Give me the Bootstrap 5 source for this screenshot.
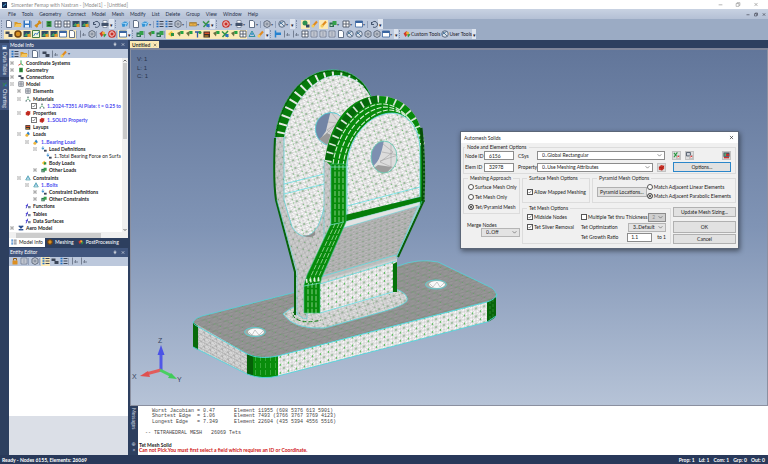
<!DOCTYPE html>
<html lang="en">
<head>
<meta charset="utf-8">
<meta name="viewport" content="width=device-width, initial-scale=1">
<title>Simcenter Femap with Nastran</title>
<link href="https://cdn.jsdelivr.net/npm/bootstrap@5.3.0/dist/css/bootstrap.min.css" rel="stylesheet">
<style>
:root{--navy:#2d3f5f;--cap:#40557d;--strip:#bcc8dc;--tick:#9babc4}
body{font:5px/6px "Lato","Liberation Sans",sans-serif;color:#1c1c28;background:var(--navy);overflow:hidden}
button,input,select{font:inherit;color:inherit}
button{border:0;background:none;padding:0}
svg{display:block}
.app{height:100vh}
.titlebar{height:9px;background:#fff;color:#8b8b8b;padding:0 9px 0 2px}
.winbtns{gap:12px}
.menubar{height:10px;background:linear-gradient(#c8d2e2,#b4c0d5);padding:0 2px 0 5px}
.menubar a{color:#27324a;text-decoration:none;padding:0 3px}
.tools{background:var(--tick);padding-bottom:1px}
.trow{height:10px}
.tgroup{background:var(--strip)}
.tb{width:9px;height:9px;display:grid;place-items:center;color:#4d5a70}
.tb svg{width:8px;height:8px}
.tb.hot{background:#fbeab8}
.tgrip{width:3px;height:8px;border-left:1px dotted #8291ad;margin-left:1px}
.tools .trow:first-child .tgrip{width:5px}
.tools .trow:first-child .tovf{width:5px}
.tools .trow:first-child .tgroup:first-child .tgrip{width:3px}
.tsep{width:2px;height:7px;border-left:1px solid #93a1ba}
.tcar{width:4px;color:#4a5870;font-size:4px;line-height:9px}
.tovf{width:4px;background:#dde4ef;height:10px;line-height:13px;text-align:center}
.rail{width:9px}
.vtab{writing-mode:vertical-rl;background:var(--cap);color:#e4e9f2;margin-top:3px;padding:2px 1px;line-height:7px;gap:2px}
.side{width:119px;margin-right:2px}
.model{flex:207 1 0;min-height:0}
.entity{flex:207 1 0;min-height:0}
.cap{height:9px;background:var(--cap);color:#fff;padding:0 3px 0 1px}
.ptools{height:9px;background:var(--strip);padding-left:1px}
.tree{background:#fff;overflow:hidden}
.treelist{display:grid;grid-template-rows:repeat(24,1fr);list-style:none;margin:0;padding:1px 0 0 1px;font-weight:700;color:#222;overflow:hidden;white-space:nowrap}
.treelist li{display:flex;align-items:center;gap:2px;min-height:0}
.treelist svg{width:6px;height:6px;flex:none}
.treelist .pm{width:4px;height:4px;margin-right:2px}
.treelist .blue{color:#4a4af0}
.treelist input{width:6px;height:6px;margin:0;flex:none;appearance:none;border:1px solid #777;background:#fff}
.l1{padding-left:7px}.l2{padding-left:15px}.l3{padding-left:23px}.l4{padding-left:36px}
.treelist .tick{padding-left:21px}
.vbar{width:6px;background:#f0f0f0}
.vbar i{height:44%;background:#c9c9c9;margin:0 1px}
.hbar{height:6px;background:#f0f0f0;padding:1px 6px 0 7px}
.hbar i{display:block;width:80%;height:5px;background:#cdcdcd}
.ptabs{height:10px;padding-bottom:1px}
.ptabs button{color:#fff;gap:2px;padding:0 2px}
.ptabs svg{width:6px;height:6px}
.ptabs .on{background:#fff;color:#222}
.note{height:39px;background:#dbdfe7}
.doctabs{height:8px;padding-top:1px}
.doctabs button{background:#fbe9b5;color:#333;font-weight:700;padding:0 2px;gap:3px}
.view{border:1px solid #8b90a0;border-top-width:2px;border-top-color:#80869a;background:linear-gradient(#62769a,#8094b5 50%,#b6c3d7)}
.view>svg{width:100%;height:100%}
.msgs{height:49px}
.msgrail{width:8px;color:#d5dbe7;writing-mode:vertical-rl;line-height:8px;padding:2px 0}
.log{display:grid;grid-template-rows:repeat(8,1fr);background:#fff;padding:2px 0 2px 1px;white-space:pre;font-family:"Liberation Mono",monospace;color:#444}
.log div{display:flex;align-items:center;min-height:0}
.log .c1{width:82px;margin-left:13px}
.log .say{font-family:"Lato",sans-serif;font-weight:700;color:#222}
.log .err{color:#d01313}
.status{height:9px;color:#fff;padding:0 3px 0 2px;background:#29395a;font-weight:700}
.dlg{position:absolute;left:329px;top:81px;width:279px;background:#f0f0f0;border:1px solid #5b6678;box-shadow:1px 2px 5px #0007;color:#222}
.dlgcap{height:11px;background:#fff;padding:0 4px 0 3px}
.dlgbody{padding:1px 2px 4px;gap:1px}
.dlg fieldset{border:1px solid #dcdcdc;padding:1px 4px;min-width:0}
.dlg legend{float:none;width:auto;font-size:5px;line-height:6px;margin:0;padding:0 2px}
.dlg label,.push{white-space:nowrap}
.txt,.sel{height:9px;border:1px solid #8c8c8c;background:#fff;border-radius:0;padding:0 4px;line-height:7px}
.sel{appearance:none;background:#fff url("data:image/svg+xml,%3Csvg xmlns='http://www.w3.org/2000/svg' viewBox='0 0 8 8'%3E%3Cpath d='M1 2l3 3 3-3' fill='none' stroke='%23555'/%3E%3C/svg%3E") no-repeat right 2px center/5px 5px}
.sel.flat{background-color:#e3e3e3;border-color:#b5b5b5}
.sel:disabled{background-color:#cfcfcf;color:#888;padding:0 3px;opacity:1}
.push{background:#e1e1e1;border:1px solid #b0b0b0;height:10px;line-height:8px;text-align:center}
.push.tall{height:12px}
.push.focus{border-color:#2b86c9;width:58px}
.push.pyr{padding:0 2px}
.sq{width:9px;height:9px;background:#dedede;border:1px solid #c2c2c2;display:grid;place-items:center}
.sq svg{width:7px;height:7px}
.opt{gap:1px;height:10px}
.opt input{appearance:none;width:6px;height:6px;margin:0;border:1px solid #555;background:#fff;flex:none}
.opt .txt{width:25px;height:9px;border-color:#8c8c8c;padding:0 3px}
.opt input[type=radio]{border-radius:50%}
.opt input[type=radio]:checked{background:#333;box-shadow:inset 0 0 0 1px #fff}
.opt input[type=checkbox]:checked,.treelist input:checked{background:#fff url("data:image/svg+xml,%3Csvg xmlns='http://www.w3.org/2000/svg' viewBox='0 0 8 8'%3E%3Cpath d='M1 4l2 2 4-5' fill='none' stroke='%23222'/%3E%3C/svg%3E") center/4px 4px no-repeat}
.w-lab{width:19px}.w-lab2{width:19px}.w-num{width:30px}
.colapp{width:57px}.colsurf{width:68px}.colbtn{width:63px;padding-top:2px}
.w-thk{width:18px}.w-opt{width:38px}.w-merge{width:39px}
.dlg .nodes{padding-left:1px}
.surfrow{height:19px}
.surfrow .opt{height:9px}
.nlabel{width:46px}
.nodes .r2{margin-top:2px}
.nodes .off{margin-left:7px}
.nodes .far{margin-left:28px}
.low,.toprow{gap:2px}
.rightcol{gap:2px}
.merge{padding-top:8px}
.tetcol{width:85px}
.cancel{margin-top:1px}
</style>
<script src="https://cdn.jsdelivr.net/npm/bootstrap@5.3.0/dist/js/bootstrap.bundle.min.js"></script>
</head>
<body>
<svg width="0" height="0" class="position-absolute" aria-hidden="true">
<symbol id="i-doc" viewBox="0 0 16 16"><path d="M3 1h7l3 3v11H3z" fill="#fff" stroke="#44546e" stroke-width="1.6"/></symbol>
<symbol id="i-open" viewBox="0 0 16 16"><path d="M1 4h5l2 2h6v8H1z" fill="#d89a2b"/><path d="M4 8h12l-3 6H1z" fill="#f4c55c"/></symbol>
<symbol id="i-save" viewBox="0 0 16 16"><path d="M1 1h14v14H1z" fill="#2d72c0"/><path d="M4 1h8v6H4zM4 10h8v5H4z" fill="#e8f0fa"/></symbol>
<symbol id="i-link" viewBox="0 0 16 16"><path d="M3 13L13 3M2 10l5 4M9 2l5 5" stroke="#d48a14" stroke-width="4"/></symbol>
<symbol id="i-geo" viewBox="0 0 16 16"><path d="M3 2h10v12H3z" fill="#3c9d4a"/><path d="M5 5h6M5 8h6M5 11h6" stroke="#174a25" stroke-width="1.5"/></symbol>
<symbol id="i-mesh" viewBox="0 0 16 16"><path d="M2 2h12v12H2zM8 2v12M2 8h12" fill="#fff" stroke="#3c4658" stroke-width="1.6"/></symbol>
<symbol id="i-list" viewBox="0 0 16 16"><path d="M1 3h4M1 8h4M1 13h4" stroke="#1e6ec4" stroke-width="3"/><path d="M7 3h8M7 8h8M7 13h8" stroke="#3c4658" stroke-width="2"/></symbol>
<symbol id="i-pic" viewBox="0 0 16 16"><path d="M1 2h14v12H1z" fill="#334a66"/><path d="M2 12l5-6 3 3 4-5v9z" fill="#3da663"/><path d="M9 8h6v6H9z" fill="#e89b2b"/></symbol>
<symbol id="i-undo" viewBox="0 0 16 16"><path d="M3 4v5h5M3 9a6 6 0 1 1 3 5" fill="none" stroke="#43536c" stroke-width="2"/></symbol>
<symbol id="i-print" viewBox="0 0 16 16"><path d="M4 1h8v5H4zM4 10h8v5H4z" fill="#fff" stroke="#43536c"/><path d="M1 6h14v6H1z" fill="#43536c"/></symbol>
<symbol id="i-cube" viewBox="0 0 16 16"><path d="M1 6l6-3 8 1-3 8-9 2z" fill="#3192d6"/><path d="M1 6l9 1 5-3M10 7l-1 6" fill="none" stroke="#d8effc" stroke-width="1.4"/></symbol>
<symbol id="i-gray" viewBox="0 0 16 16"><path d="M8 1l6 3v8l-6 3-6-3V4z" fill="#c9cdd5" stroke="#636e80" stroke-width="2"/><path d="M5 5h6v6H5z" fill="#8b94a3"/></symbol>
<symbol id="i-rule" viewBox="0 0 16 16"><path d="M1 5h14v7H1z" fill="#e7b04a" stroke="#8f661a"/><path d="M4 5v3M8 5v4M12 5v3" stroke="#6d4a0c"/></symbol>
<symbol id="i-red" viewBox="0 0 16 16"><circle cx="8" cy="8" r="6.5" fill="#f3d9d5" stroke="#c8312a" stroke-width="2.4"/><path d="M5 5h6v6H5z" fill="#c8312a"/></symbol>
<symbol id="i-x" viewBox="0 0 16 16"><path d="M2 3l12 11M14 2L3 14" stroke="#339347" stroke-width="3"/><path d="M9 8h6v6H9z" fill="#2f6fc0"/></symbol>
<symbol id="i-xr" viewBox="0 0 16 16"><path d="M2 2l8 9M10 1L2 12" stroke="#22963a" stroke-width="2.6"/><path d="M8 8h7v7H8z" fill="#fff" stroke="#888"/><path d="M10 12l4-3" stroke="#d33" stroke-width="2.4"/></symbol>
<symbol id="i-lr" viewBox="0 0 16 16"><path d="M1 1h9v8H1z" fill="#cfd4dc" stroke="#43505f" stroke-width="2"/><path d="M8 8h7v7H8z" fill="#fff" stroke="#888"/><path d="M10 12l4-3" stroke="#d33" stroke-width="2.4"/></symbol>
<symbol id="i-prev" viewBox="0 0 16 16"><path d="M1 1h14v10H1z" fill="#3b4b5c"/><path d="M3 3h5v6H3z" fill="#58ab72"/><path d="M7 4h7v5H7z" fill="#c9302c"/><path d="M2 13h12" stroke="#c9302c" stroke-width="3"/></symbol>
<symbol id="i-pen" viewBox="0 0 16 16"><path d="M3 13L12 3" stroke="#e08a1e" stroke-width="4"/><circle cx="4" cy="12" r="3" fill="#f5cb59"/></symbol>
<symbol id="i-dot" viewBox="0 0 16 16"><circle cx="6" cy="6" r="5" fill="#2d9150"/><path d="M8 9h7v6H8z" fill="#334a66"/></symbol>
<symbol id="i-ball" viewBox="0 0 16 16"><circle cx="8" cy="8" r="6" fill="#d99022" stroke="#734410" stroke-width="3"/></symbol>
<symbol id="i-plot" viewBox="0 0 16 16"><path d="M1 1h14v14H1z" fill="#eef8dd" stroke="#477d45" stroke-width="2"/><path d="M3 12l4-6 3 3 4-6" fill="none" stroke="#3978c2" stroke-width="2"/></symbol>
<symbol id="i-win" viewBox="0 0 16 16"><path d="M1 2h14v12H1z" fill="#fff" stroke="#3a65a0" stroke-width="1.6"/><path d="M1 2h14v4H1z" fill="#3a65a0"/></symbol>
<symbol id="i-g2" viewBox="0 0 16 16"><path d="M1 5h9v9H1z" fill="#2f6b52"/><path d="M7 2h8v8H7z" fill="#34a04a"/><path d="M3 9h4v3H3z" fill="#b6e3c0"/></symbol>
<symbol id="i-tri" viewBox="0 0 16 16"><path d="M8 2l6 11H2z" fill="none" stroke="#3192a0" stroke-width="2"/><circle cx="8" cy="8" r="2" fill="#2e8bd0"/></symbol>
<symbol id="i-axis" viewBox="0 0 16 16"><path d="M8 1v9l6 4" fill="none" stroke="#29a049" stroke-width="2.4"/><path d="M8 10l-7 4" stroke="#d83a30" stroke-width="2.4"/></symbol>
<symbol id="i-blk" viewBox="0 0 16 16"><path d="M1 3h8v5H1zM7 8h8v6H7z" fill="#3c4658"/></symbol>
<symbol id="i-mat" viewBox="0 0 16 16"><path d="M8 2v5M3 13l4-5M13 13L9 8" stroke="#3a9f5b" stroke-width="2"/><circle cx="3" cy="13" r="2" fill="#6a7686"/><circle cx="13" cy="13" r="2" fill="#6a7686"/><circle cx="8" cy="3" r="2" fill="#6a7686"/></symbol>
<symbol id="i-prop" viewBox="0 0 16 16"><path d="M2 7l5-5 7 2v7l-5 4-7-2z" fill="#cf3328"/><path d="M2 7l7 2 5-5M9 9v6" stroke="#7c130d" fill="none"/></symbol>
<symbol id="i-lay" viewBox="0 0 16 16"><path d="M1 3h13v12H1z" fill="#3b2d29"/><path d="M3 5h10v3H3z" fill="#d9552c"/><path d="M3 11h8v2H3z" fill="#e5a52c"/></symbol>
<symbol id="i-load" viewBox="0 0 16 16"><path d="M8 1c4 4 5 6 4 9l-8 1C3 7 6 5 8 1z" fill="#2d80c8"/><circle cx="5" cy="11" r="4" fill="#edb43a"/></symbol>
<symbol id="i-down" viewBox="0 0 16 16"><path d="M5 1v7M2 5l3 4 3-4" stroke="#247fc9" stroke-width="2.2" fill="none"/><path d="M8 10h7v5H8z" fill="#3c4658"/></symbol>
<symbol id="i-fx" viewBox="0 0 16 16"><path d="M7 2L3 14M2 7h6" stroke="#4a42d4" stroke-width="2.6"/><path d="M8 8h7v6H8z" fill="#7b8698"/></symbol>
<symbol id="i-aero" viewBox="0 0 16 16"><path d="M2 2l12 12M14 2L2 14M8 1v14" stroke="#274b8d" stroke-width="3"/></symbol>
<symbol id="i-lock" viewBox="0 0 16 16"><path d="M5 7V3h6v4" fill="none" stroke="#8b5a14" stroke-width="2"/><path d="M3 7h10v8H3z" fill="#dd8f22"/></symbol>
<symbol id="i-star" viewBox="0 0 16 16"><path d="M2 8l7-6 5 6-5 6z" fill="#f1c53d"/><path d="M8 6h6v6H8z" fill="#2c8f45"/></symbol>
<symbol id="i-bolt" viewBox="0 0 16 16"><path d="M2 6l8-4-2 11z" fill="#6a7042"/><path d="M9 2h6v6H9z" fill="#25a343"/></symbol>
<symbol id="i-tt" viewBox="0 0 16 16"><path d="M2 4h11M7 4v11" stroke="#2e57a8" stroke-width="2.6"/><circle cx="12" cy="5" r="3" fill="#25a343"/></symbol>
<symbol id="i-flag" viewBox="0 0 16 16"><path d="M3 1v14" stroke="#2782cf" stroke-width="3"/><path d="M4 5h10v5H4z" fill="#2782cf"/></symbol>
<symbol id="i-gflag" viewBox="0 0 16 16"><path d="M3 1v14M6 10h8M9 6v6" stroke="#758093" stroke-width="2"/></symbol>
<symbol id="i-gbox" viewBox="0 0 16 16"><path d="M2 2h12v12H2z" fill="#d6dae2" stroke="#69758a" stroke-width="1.6"/><path d="M5 6h6M5 10h6" stroke="#69758a" stroke-width="1.6"/></symbol>
<symbol id="i-rg" viewBox="0 0 16 16"><path d="M1 7l6-5 3 6-5 6z" fill="#cf3a2b"/><path d="M8 6l7 3-5 6z" fill="#2c9a48"/><circle cx="9" cy="6" r="3" fill="#e9b436"/></symbol>
<symbol id="i-globe" viewBox="0 0 16 16"><circle cx="8" cy="8" r="6.5" fill="#d8dfe8" stroke="#43536c" stroke-width="1.6"/><path d="M4 4l8 8M2 9l9-6" stroke="#33628c" stroke-width="1.6"/></symbol>
<symbol id="i-pin" viewBox="0 0 16 16"><path d="M5 2h6v7H5zM3 9h10M8 9v6" fill="none" stroke="currentColor" stroke-width="2"/></symbol>
<symbol id="i-close" viewBox="0 0 16 16"><path d="M3 3l10 10M13 3L3 13" stroke="currentColor" stroke-width="2"/></symbol>
<symbol id="i-rest" viewBox="0 0 16 16"><path d="M2 5h9v9H2zM5 5V2h9v9h-3" fill="none" stroke="currentColor" stroke-width="1.8"/></symbol>
<symbol id="i-min" viewBox="0 0 16 16"><path d="M2 9h12" stroke="currentColor" stroke-width="2"/></symbol>
<symbol id="i-plus" viewBox="0 0 16 16"><path d="M1 1h14v14H1z" fill="#fff" stroke="#999" stroke-width="2"/><path d="M4 8h8M8 4v8" stroke="#444" stroke-width="2"/></symbol>
<symbol id="i-minus" viewBox="0 0 16 16"><path d="M1 1h14v14H1z" fill="#fff" stroke="#999" stroke-width="2"/><path d="M4 8h8" stroke="#444" stroke-width="2"/></symbol>
<symbol id="i-none" viewBox="0 0 16 16"></symbol>
</svg>

<div class="app d-flex flex-column">
  <header class="titlebar d-flex align-items-center justify-content-between flex-shrink-0">
    <div class="d-flex align-items-center gap-1"><svg width="5" height="6" viewBox="0 0 10 12"><path d="M0 0h10v12H0z" fill="#182c50"/><path d="M2 8c4 0 2-4 6-4" stroke="#50b0e0" fill="none" stroke-width="2"/></svg><span>Simcenter Femap with Nastran - [Model1] - [Untitled]</span></div>
    <div class="winbtns d-flex"><button type="button" aria-label="Minimize"><svg width="5" height="5"><use href="#i-min"/></svg></button><button type="button" aria-label="Restore"><svg width="6" height="5"><use href="#i-rest"/></svg></button><button type="button" aria-label="Close"><svg width="6" height="5"><use href="#i-close"/></svg></button></div>
  </header>
  <nav class="menubar d-flex align-items-center justify-content-between flex-shrink-0">
    <div class="d-flex"><a href="#">File</a><a href="#">Tools</a><a href="#">Geometry</a><a href="#">Connect</a><a href="#">Model</a><a href="#">Mesh</a><a href="#">Modify</a><a href="#">List</a><a href="#">Delete</a><a href="#">Group</a><a href="#">View</a><a href="#">Window</a><a href="#">Help</a></div>
    <div class="d-flex gap-1"><svg width="4" height="5"><use href="#i-min"/></svg><svg width="4" height="5"><use href="#i-rest"/></svg><svg width="4" height="5"><use href="#i-close"/></svg></div>
  </nav>
  <div class="tools flex-shrink-0">
    <div class="trow d-flex" data-bar="g doc open save | link | geo mesh mesh pic pic | undo print o;g cube | doc cube v | list list gray v | rule v x o;g red v print v doc v | gray v | globe v o;g *dot pen *pen g2 v mesh v win v | undo o"></div>
    <div class="trow d-flex" data-bar="g *blk *ball *pic *plot *pic *pic *win *doc | gflag gray | rg red | *win o;g g2 | bolt g2 | *star *bolt *bolt *tt *lay *bolt *x *bolt *mesh tri pen o;g flag gflag gflag mesh gbox gbox gbox doc globe globe gray gray win v o;g rg:Custom_Tools globe:User_Tools o"></div>
  </div>
  <main class="d-flex flex-fill overflow-hidden">
    <div class="rail d-flex flex-column align-items-start flex-shrink-0">
      <button type="button" class="vtab d-flex align-items-center"><svg width="5" height="5"><use href="#i-win"/></svg>Data Table</button>
      <button type="button" class="vtab d-flex align-items-center"><svg width="5" height="5"><use href="#i-x"/></svg>Charting</button>
    </div>
    <aside class="side d-flex flex-column flex-shrink-0">
      <section class="model d-flex flex-column">
        <div class="cap d-flex align-items-center justify-content-between"><span>Model Info</span><span class="d-flex gap-1"><svg width="4" height="5"><use href="#i-pin"/></svg><svg width="4" height="5"><use href="#i-close"/></svg></span></div>
        <div class="ptools d-flex" data-bar="list open | doc | blk gflag pen v"></div>
        <div class="tree d-flex flex-fill"><ul class="treelist flex-fill" id="tree"></ul><div class="vbar d-flex flex-column flex-shrink-0"><svg width="4" height="5" class="mx-auto" viewBox="0 0 8 10"><path d="M1 7l3-3 3 3" fill="none" stroke="#444" stroke-width="1.5"/></svg><i></i><svg width="4" height="5" class="mx-auto mt-auto" viewBox="0 0 8 10"><path d="M1 4l3 3 3-3" fill="none" stroke="#444" stroke-width="1.5"/></svg></div></div>
        <div class="hbar"><i></i></div>
        <div class="ptabs d-flex"><button type="button" class="on d-flex align-items-center"><svg><use href="#i-list"/></svg>Model Info</button><button type="button" class="d-flex align-items-center"><svg><use href="#i-ball"/></svg>Meshing</button><button type="button" class="d-flex align-items-center"><svg><use href="#i-rg"/></svg>PostProcessing</button></div>
      </section>
      <section class="entity d-flex flex-column">
        <div class="cap d-flex align-items-center justify-content-between"><span>Entity Editor</span><span class="d-flex gap-1"><svg width="4" height="5"><use href="#i-pin"/></svg><svg width="4" height="5"><use href="#i-close"/></svg></span></div>
        <div class="ptools d-flex" data-bar="lock gbox | gray | *list blk list | gflag gflag"></div>
        <div class="bg-white flex-fill"></div>
        <div class="note"></div>
      </section>
    </aside>
    <div class="d-flex flex-column flex-fill overflow-hidden">
      <div class="doctabs d-flex flex-shrink-0"><button type="button" class="d-flex align-items-center">Untitled <svg width="4" height="4"><use href="#i-close"/></svg></button></div>
      <div class="view position-relative flex-fill overflow-hidden">
        <svg viewBox="131 50 636 355" preserveAspectRatio="xMinYMin slice" role="img" aria-label="Meshed bracket">
          <defs>
            <pattern id="mw" width="8" height="8" patternUnits="userSpaceOnUse" patternTransform="skewY(-15)"><path d="M0 0h8v8H0z" fill="#f9f9f9"/><path d="M0 0h8M0 0v8M0 0l8 8M8 0L0 8M0 4h8M4 0v8" stroke="#8d8d8d" stroke-width=".4"/><path d="M3.400 4h1.200M0 .3h1M0 7.600h1" stroke="#35c335" stroke-width=".8"/></pattern>
            <pattern id="mf" width="9" height="8" patternUnits="userSpaceOnUse" patternTransform="rotate(-18)"><path d="M0 0h9v8H0z" fill="#fafafa"/><path d="M0 0l4 3 5-3M4 3L0 8M4 3l5 5M4 3v5M4 3V0M0 0v8M0 8h9M0 4l4-1 5 1" fill="none" stroke="#8a8a8a" stroke-width=".4"/><path d="M3.500 3h1.100M0 .5h.8M0 4h.8" stroke="#4cc64c" stroke-width=".9"/></pattern>
            <pattern id="mg" width="6" height="5" patternUnits="userSpaceOnUse" patternTransform="skewY(-17)"><path d="M0 0h6v5H0z" fill="#bdbdbd"/><path d="M0 0h6M0 2.500h6M0 0l6 5M6 0L0 5M3 0v5" stroke="#8b8b8b" stroke-width=".35"/><path d="M2.600 2.500h.8" stroke="#5cb65c" stroke-width=".7"/></pattern>
            <pattern id="mt" width="11" height="7" patternUnits="userSpaceOnUse" patternTransform="skewY(-15)"><path d="M0 0h11v7H0z" fill="#979797"/><path d="M0 0l5.500 3.500L11 0M0 7l5.500-3.500L11 7M0 3.500h11M0 7h11M0 0h11" fill="none" stroke="#7c7c7c" stroke-width=".4"/><path d="M5 3.500h1M0 .4h.8M8 5h.8" stroke="#52b552" stroke-width=".8"/></pattern>
            <pattern id="ms" width="6" height="7" patternUnits="userSpaceOnUse" patternTransform="skewY(28)"><path d="M0 0h6v7H0z" fill="#d8d8d8"/><path d="M0 0h6M0 0v7M0 0l6 7M6 0L0 7M0 3.500h6" stroke="#8c8c8c" stroke-width=".4"/></pattern>
            <pattern id="ml" width="6" height="7" patternUnits="userSpaceOnUse" patternTransform="rotate(14)"><path d="M0 0h6v7H0z" fill="#cecece"/><path d="M0 0h6M0 0v7M0 0l6 7M6 0L0 7" stroke="#8a8a8a" stroke-width=".4"/><path d="M0 .4h.8" stroke="#3bb53b" stroke-width=".8"/></pattern>
            <pattern id="mgr" width="5" height="7" patternUnits="userSpaceOnUse"><path d="M0 0h5v7H0z" fill="#088c0b"/><path d="M0 0v7" stroke="#7bd47b" stroke-width=".8" stroke-dasharray="4 2"/></pattern>
            <clipPath id="rearRing"><path d="M275 137C278 108 298 70 333 70C352 70 366 82 371 97C362 80 348 75 336 75C310 77 290 108 284 137z"/></clipPath>
            <clipPath id="h1"><ellipse cx="331" cy="129" rx="15.500" ry="16.500"/></clipPath>
            <clipPath id="h2"><ellipse cx="384" cy="157" rx="13" ry="16"/></clipPath>
          </defs>
          <!-- base plate -->
          <path d="M193 322Q195 318 202 316L398 266Q418 258 438 262L492 288Q499 294 495 299L487 302L278 356Q260 360 247 354L195 325z" fill="url(#mt)" stroke="#51d6dc" stroke-width=".8"/>
          <path d="M193 322L247 354V374L193 347z" fill="url(#ms)"/>
          <path d="M278 356L487 302V322L278 376z" fill="url(#mw)"/>
          <path d="M193 322l5 4v24l-5-3z" fill="#076b0a"/>
          <path d="M247 354q14 5 31 2v20q-17 4-31-2z" fill="url(#mgr)"/><path d="M247 354l6 2v20l-6-2z" fill="#056008"/>
          <path d="M487 302l9-5v19q-3 4-9 6z" fill="#07650a"/><path d="M490 301v20M493 299v19" stroke="#3f9c40" stroke-width=".6" stroke-dasharray="3 2"/>
          <path d="M193 322L195 325L247 354Q260 360 278 356L487 302Q496 299 497 294M193 347L247 374Q262 380 278 376L487 322L496 316" fill="none" stroke="#51d6dc" stroke-width=".9"/>
          <g fill="#fafafa" stroke="#51d6dc" stroke-width=".8"><ellipse cx="255" cy="332" rx="10.500" ry="4.500" fill="#a3aba6"/><ellipse cx="256" cy="332" rx="8" ry="3.500" stroke="none"/><ellipse cx="436" cy="284.500" rx="10.500" ry="4.500" fill="#a3aba6"/><ellipse cx="437" cy="284.500" rx="8" ry="3.500" stroke="none"/></g>
          <path d="M249 332l3 3 3-5 4 5 4-4M430 284l3 3 4-5 3 5 4-4" stroke="#999" stroke-width=".5" fill="none"/>
          <!-- fillet -->
          <path d="M283 314Q290 308 296 306L396 289Q409 294 407 301Q402 306 385 311L325 328Q294 330 283 314z" fill="url(#mf)"/><path d="M283 314Q290 308 296 306L396 289Q409 294 407 301Q402 306 385 311L325 328Q294 330 283 314z" fill="#9994" stroke="#51d6dc" stroke-width=".8"/>
          <path d="M296 310Q290 314 296 319Q306 324 321 320" stroke="#14861a" fill="none" stroke-dasharray="4 2"/>
          <!-- rear lug -->
          <path d="M274 175C272 110 298 70 333 70C352 70 366 82 371 97L346 200L307 277V319Q298 318 295 310V272L276 200z" fill="url(#ml)" stroke="#55d2d8" stroke-width=".6"/>
          <path d="M284 200V137C290 108 310 77 336 75C348 75 362 80 371 97L326 200Q322 217 318 226Q305 246 292 227z" fill="url(#mf)" stroke="#55d2d8" stroke-width=".7"/>
          <path d="M298 231q8 9 17 0v4q-8 6-17-4" fill="#8f8f8f"/>
          <g clip-path="url(#rearRing)"><path d="M270 60h110v80H270z" fill="#e6ece6"/><path d="M279 140C284 105 304 75 334 73C350 72 364 82 371 97" fill="none" stroke="#077a0b" stroke-width="13" stroke-dasharray="6.500 2"/><path d="M275 137C278 108 298 70 333 70C352 70 366 82 371 97" stroke="#045d07" stroke-width="3" fill="none"/></g>
          <path d="M275 137C278 108 298 70 333 70C352 70 366 82 371 97" fill="none" stroke="#2fae52" stroke-width=".8" stroke-dasharray="3 1"/>
          <path d="M275 138Q273 180 276 200L295 272V315" fill="none" stroke="#06640a" stroke-width="2"/><path d="M277 200L297 272V315" fill="none" stroke="#62d2d6" stroke-width=".6"/>
          <path d="M284 184l40-10M284 194l40-10" stroke="#67dfe4" stroke-width=".8"/>
          <g clip-path="url(#h1)"><path d="M315 110h32v36h-32z" fill="#7285a5"/><path d="M331 110q-4 16-5 21l-7 10 8 6h24v-37z" fill="#d5d5d5"/><path d="M319 139l8-6 12 6-10 8z" fill="#999"/><path d="M331 112l8 10-12 8 12 9M328 122l18 2M326 134l12-12v24" stroke="#999" stroke-width=".5" fill="none"/></g><ellipse cx="331" cy="129" rx="15.500" ry="16.500" fill="none" stroke="#4fd0d8" stroke-width=".8"/>
          <!-- front lug -->
          <path d="M325 158C330 120 352 96 378 96C408 96 424 120 424 150V200L397 258V292L320 313H304V285L307 276L324 234z" fill="#cfcfcf"/>
          <path d="M324 160L331 164V225L324 240z" fill="url(#ml)" stroke="#5ad0d6" stroke-width=".6"/>
          <path d="M325 160C330 120 352 96 378 96C408 96 424 120 424 150V200L420 206V145C418 124 405 113 392 113C368 113 347 140 346 167L331 166z" fill="#078a0b"/>
          <path d="M328 162C334 128 354 102 378 99" fill="none" stroke="#05690a" stroke-width="7"/>
          <path d="M328 162C334 128 354 102 378 99C404 99 419 120 422 150" fill="none" stroke="#d7e7d7" stroke-width="7" stroke-dasharray="1.700 6.800"/>
          <g fill="none" stroke="#d5efd5" stroke-width="1.100" stroke-dasharray="5 1.500"><path d="M333 164C337 133 358 106 380 104C402 103 417 125 420 146"/><path d="M338 165C342 135 361 110 384 107C402 107 415 123 420 140"/><path d="M343 166C346 139 365 113 388 110C402 110 412 119 418 133"/></g>
          <path d="M421 128Q425 160 423 202" fill="none" stroke="#064f08" stroke-width="3"/><path d="M424 135V200" fill="none" stroke="#78b878" stroke-width=".7" stroke-dasharray="2 2"/>
          <path d="M347 216V165C348 140 368 113 392 113C406 113 419 126 420 148V197z" fill="url(#mf)" stroke="#50d5dc" stroke-width=".8"/>
          <path d="M347 206L420 187" stroke="#67dfe4" stroke-width=".8"/>
          <g clip-path="url(#h2)"><path d="M370 140h28v34h-28z" fill="#7d90b1"/><path d="M384 140q-3 17-7 22l-7 8 8 6h22v-36z" fill="#dcdcdc"/><path d="M371 170l7-5 14 2-7 8z" fill="#9d9d9d"/><path d="M383 144l10 8-13 10 14 6M382 152l16 3-18 6M391 140v34" fill="none" stroke="#999" stroke-width=".5"/></g><ellipse cx="384" cy="157" rx="13" ry="16" fill="none" stroke="#63cfb4" stroke-width=".8"/>
          <path d="M345 215L420 197V202L344 222z" fill="#067d09"/>
          <path d="M344 222L420 202L417 209L343 228z" fill="#e3e3e3" stroke="#8ddfe2" stroke-width=".5"/>
          <path d="M343 228L418 206L396 259L320 281z" fill="url(#mg)" stroke="#6ad8dc" stroke-width=".6"/>
          <path d="M320 281L396 259V292L320 313z" fill="url(#mw)"/><path d="M320 277L396 255V261L320 284z" fill="#c4c4c4aa"/><path d="M320 284L396 261M320 313L396 291M320 277L396 255" stroke="#61dce0" stroke-width=".8"/>
          <path d="M424 200L398 257" stroke="#07600a" stroke-width="2"/><path d="M422 201L396 257" stroke="#55d2d8" stroke-width=".6"/>
          <path d="M393 264l4-2v30h-4z" fill="#06720a"/>
          <path d="M331 164H346V222L322 277L320 284V313H304V285L307 275L331 224z" fill="#078a0b" stroke="#3fc78a" stroke-width=".6"/>
          <g fill="none" stroke="#a3dfa3" stroke-width=".8" stroke-dasharray="5 1.500"><path d="M335 165V224L311 276L308 285V313"/><path d="M339 165V224L315 276L312 285V313"/><path d="M343 165V222L319 276L316 285V313"/></g>
          <path d="M306 281l16-2" stroke="#dff5df" stroke-width="4" stroke-dasharray="1.500 2.500"/><path d="M304 286L320 283M331 167H346M330 225L344 222" stroke="#7ee8d9" stroke-width=".7"/>
          <!-- triad -->
          <g stroke-width="3"><path d="M161 370V353" stroke="#5058e8"/><path d="M161 370L146 374" stroke="#e25b5b"/><path d="M160 370L172 376" stroke="#48cf60"/></g><path d="M157.500 355L161 345l3.500 10z" fill="#4b53e6"/><path d="M140 376l8-5 2 6z" fill="#df5050"/><path d="M177 379l-9-1 3-5z" fill="#3ecb58"/>
          <g font-family="Liberation Sans,sans-serif" font-size="7" fill="#3a4560"><text x="158" y="343">Z</text><text x="132" y="379">X</text><text x="177" y="382">Y</text></g>
          <g font-family="Liberation Sans,sans-serif" font-size="6" fill="#2a344b"><text x="137" y="61">V: 1</text><text x="137" y="70">L: 1</text><text x="137" y="78">C: 1</text></g>
        </svg>

        <form class="dlg" aria-label="Automesh Solids">
          <div class="dlgcap d-flex align-items-center justify-content-between"><span>Automesh Solids</span><button type="button" aria-label="Close dialog"><svg width="5" height="5"><use href="#i-close"/></svg></button></div>
          <div class="dlgbody d-flex flex-column">
            <fieldset class="nodes"><legend>Node and Element Options</legend>
              <div class="d-flex align-items-center"><label class="w-lab" for="nid">Node ID</label><input class="txt w-num" id="nid" value="6156"><label class="w-lab2 ms-1" for="cs">CSys</label><select class="sel flex-fill" id="cs"><option>0..Global Rectangular</option></select><span class="off d-flex gap-1"><button type="button" class="sq" aria-label="Pick"><svg><use href="#i-xr"/></svg></button><button type="button" class="sq" aria-label="List"><svg><use href="#i-lr"/></svg></button></span><button type="button" class="sq far" aria-label="Preview"><svg><use href="#i-prev"/></svg></button></div>
              <div class="r2 d-flex align-items-center"><label class="w-lab" for="eid">Elem ID</label><input class="txt w-num" id="eid" value="32978"><label class="w-lab2 ms-1" for="pr">Property</label><select class="sel flex-fill" id="pr"><option>0..Use Meshing Attributes</option></select><button type="button" class="sq ms-1" aria-label="New property"><svg><use href="#i-prop"/></svg></button><button type="button" class="push focus off">Options...</button></div>
            </fieldset>
            <div class="d-flex low">
              <div class="colapp flex-shrink-0">
                <fieldset><legend>Meshing Approach</legend>
                  <div class="opt d-flex align-items-center"><input type="radio" name="ap" id="a1"><label for="a1">Surface Mesh Only</label></div>
                  <div class="opt d-flex align-items-center"><input type="radio" name="ap" id="a2"><label for="a2">Tet Mesh Only</label></div>
                  <div class="opt d-flex align-items-center"><input type="radio" name="ap" id="a3" checked><label for="a3">Tet/Pyramid Mesh</label></div>
                </fieldset>
                <div class="ps-1 merge"><label class="d-block" for="mn">Merge Nodes</label><select class="sel flat w-merge d-block ms-auto" id="mn"><option>0..Off</option></select></div>
              </div>
              <div class="flex-fill rightcol d-flex flex-column">
                <div class="d-flex toprow">
                  <fieldset class="colsurf flex-shrink-0"><legend>Surface Mesh Options</legend><div class="surfrow d-flex align-items-center"><div class="opt d-flex align-items-center"><input type="checkbox" id="c1" checked><label for="c1">Allow Mapped Meshing</label></div></div></fieldset>
                  <fieldset class="flex-fill"><legend>Pyramid Mesh Options</legend><div class="surfrow d-flex align-items-center justify-content-between"><button type="button" class="push pyr">Pyramid Locations...</button><div><div class="opt d-flex align-items-center"><input type="radio" name="py" id="p1"><label for="p1">Match Adjacent Linear Elements</label></div><div class="opt d-flex align-items-center"><input type="radio" name="py" id="p2" checked><label for="p2">Match Adjacent Parabolic Elements</label></div></div></div></fieldset>
                </div>
                <div class="d-flex toprow">
                  <fieldset class="flex-fill"><legend>Tet Mesh Options</legend>
                    <div class="d-flex justify-content-between">
                      <div><div class="opt d-flex align-items-center"><input type="checkbox" id="t1" checked><label for="t1">Midside Nodes</label></div><div class="opt d-flex align-items-center"><input type="checkbox" id="t2" checked><label for="t2">Tet Sliver Removal</label></div></div>
                      <div class="tetcol"><div class="opt d-flex align-items-center"><input type="checkbox" id="t3"><label for="t3">Multiple Tet thru Thickness</label><select class="sel w-thk ms-auto" disabled aria-label="Layers"><option>2</option></select></div>
                      <div class="opt d-flex align-items-center"><label class="nlabel" for="to">Tet Optimization</label><select class="sel flat w-opt ms-auto" id="to"><option>3..Default</option></select></div>
                      <div class="opt d-flex align-items-center"><label class="nlabel" for="tg">Tet Growth Ratio</label><input class="txt" id="tg" value="1.1"><span class="ms-1 text-nowrap">to 1</span></div></div>
                    </div>
                  </fieldset>
                  <div class="colbtn d-flex flex-column flex-shrink-0"><button type="button" class="push">Update Mesh Sizing...</button><button type="button" class="push tall mt-auto">OK</button><button type="button" class="push cancel">Cancel</button></div>
                </div>
              </div>
            </div>
          </div>
        </form>
      </div>
      <div class="msgs d-flex flex-shrink-0"><div class="msgrail d-flex justify-content-between"><span>Messages</span><span>⊕ ×</span></div>
        <div class="log flex-fill"><div><span class="c1">Worst Jacobian = 0.47</span><span>Element 11955 (608 5376 613 5901)</span></div><div><span class="c1">Shortest Edge  = 1.06</span><span>Element 7493 (3766 3767 3769 4123)</span></div><div><span class="c1">Longest Edge   = 7.349</span><span>Element 22604 (435 5394 4556 5516)</span></div><div></div><div>  -- TETRAHEDRAL MESH   26069 Tets</div><div></div><div class="say">Tet Mesh Solid</div><div class="say err">Can not Pick.You must first select a field which requires an ID or Coordinate.</div></div>
      </div>
    </div>
  </main>
  <footer class="status d-flex align-items-center justify-content-between flex-shrink-0"><span>Ready - Nodes 6155, Elements: 26069</span><span class="d-flex gap-1"><span>Prop: 1</span><span>Ld: 1</span><span>Com: 1</span><span>Grp: 0</span><span>Out: 0</span></span></footer>
</div>
<script>
const use = n => `<svg><use href="#i-${n}"/></svg>`;
document.querySelectorAll('[data-bar]').forEach(bar => {
  bar.innerHTML = bar.dataset.bar.split(';').map(group => '<div class="tgroup d-flex align-items-center">' + group.split(' ').map(t => {
    if (t === 'g') return '<span class="tgrip"></span>';
    if (t === '|') return '<span class="tsep"></span>';
    if (t === 'v') return '<span class="tcar">▾</span>';
    if (t === 'o') return '<span class="tovf">▾</span>';
    const hot = t[0] === '*' ? ' hot' : '';
    const [name, label] = t.replace('*', '').split(':');
    if (label) return `<button type="button" class="d-flex align-items-center"><span class="tb">${use(name)}</span><span>${label.replace('_', ' ')}</span></button>`;
    return `<button type="button" class="tb${hot}" aria-label="${name}">${use(name)}</button>`;
  }).join('') + '</div>').join('');
});
// level, expander, icon, text, style (b = blue, c = tick box, n = normal weight)
const rows = [
  [0,'plus','axis','Coordinate Systems'],[0,'plus','geo','Geometry'],[0,'plus','blk','Connections'],[0,'minus','mesh','Model'],
  [1,'plus','mesh','Elements'],[1,'minus','mat','Materials'],[2,'','mat','1..2024-T351 Al Plate: t = 0.25 to','bc'],
  [1,'minus','prop','Properties'],[2,'','prop','1..SOLID Property','bc'],[1,'none','lay','Layups'],[1,'minus','load','Loads'],
  [2,'minus','load','1..Bearing Load','b'],[3,'minus','down','Load Definitions'],[4,'','down','1..Total Bearing Force on Surfa','n'],
  [3,'none','star','Body Loads'],[3,'plus','g2','Other Loads'],[1,'minus','tri','Constraints'],[2,'minus','tri','1..Bolts','b'],
  [3,'plus','down','Constraint Definitions'],[3,'plus','g2','Other Constraints'],[1,'none','fx','Functions'],[1,'none','fx','Tables'],
  [1,'none','fx','Data Surfaces'],[0,'plus','aero','Aero Model']];
document.getElementById('tree').innerHTML = rows.map(([l, e, i, t, s = '']) =>
  `<li class="l${l}${s.includes('c') ? ' tick' : ''}">${e ? `<svg class="pm"><use href="#i-${e}"/></svg>` : ''}${s.includes('c') ? `<input type="checkbox" aria-label="${t}" checked>` : ''}${use(i)}<span class="${s.includes('b') ? 'blue' : ''} ${s.includes('n') ? 'fw-normal' : ''}">${t}</span></li>`).join('');
</script>
</body>
</html>
